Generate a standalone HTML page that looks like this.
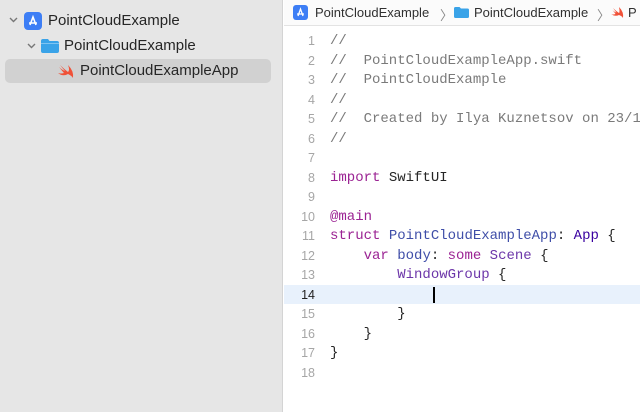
<!DOCTYPE html>
<html><head><style>
*{margin:0;padding:0;box-sizing:border-box}
body{width:640px;height:412px;overflow:hidden;background:#fff;font-family:"Liberation Sans",sans-serif;position:relative}
#side{position:absolute;left:0;top:0;width:283px;height:412px;background:#e6e6e6;border-right:1px solid #d4d4d4}
.row{position:absolute;height:24px;line-height:24px;font-size:15px;color:#262626;white-space:nowrap}
#sel{position:absolute;left:5px;top:59px;width:266px;height:24px;background:#d1d1d1;border-radius:5px}
#bc{position:absolute;left:284px;top:0;width:356px;height:26px;border-bottom:1px solid #e3e3e3;background:#fbfbfb;font-size:13px;color:#303030;white-space:nowrap;overflow:hidden}
#bc span{position:absolute;top:5px}
#ed{position:absolute;left:284px;top:27px;width:356px;height:385px;overflow:hidden}
.ln{position:absolute;left:0;width:31px;text-align:right;font-size:12.5px;color:#a6a6a6;font-family:"Liberation Sans",sans-serif}
.cd{position:absolute;left:46px;font-family:"Liberation Mono",monospace;font-size:14px;white-space:pre;color:#262626}
.c{color:#7a7a7a}.k{color:#9b2393}.t{color:#3900a0}.p{color:#6c36a9}.u{color:#3f4ea8}
</style></head><body>
<div id="side">
<svg style="position:absolute;left:9px;top:17px" width="9" height="6"><path d="M1 1 L4.5 4.5 L8 1" stroke="#777" stroke-width="1.4" fill="none"/></svg>
<svg style="position:absolute;left:24px;top:12px" width="18" height="18"><rect x="0" y="0" width="18" height="18" rx="4" fill="#3d7ef5"/><path d="M6 13 L9 5 L12 13 M5 11 H13" stroke="#fff" stroke-width="1.6" fill="none"/></svg>
<div class="row" style="left:48px;top:9px">PointCloudExample</div>
<svg style="position:absolute;left:27px;top:43px" width="9" height="6"><path d="M1 1 L4.5 4.5 L8 1" stroke="#777" stroke-width="1.4" fill="none"/></svg>
<svg style="position:absolute;left:41px;top:39px" width="18" height="14"><path d="M0 2 Q0 0 2 0 H7 L8.5 2 H16 Q18 2 18 4 V12 Q18 14 16 14 H2 Q0 14 0 12Z" fill="#3aa3e8"/><rect x="0" y="4" width="18" height="1" fill="#7fc4f2"/></svg>
<div class="row" style="left:64px;top:34px">PointCloudExample</div>
<div id="sel"></div>
<svg style="position:absolute;left:57px;top:63px" width="18" height="16"><path d="M1 10 Q6 14 11 11 Q15 13 16 15 Q17 8 11 2 Q13 7 11 9 Q7 6 3 2 Q7 7 8 8 Q5 7 2 4 Q6 9 7 10 Q4 11 1 10Z" fill="#f05138"/></svg>
<div class="row" style="left:80px;top:59px">PointCloudExampleApp</div>
</div>
<div id="bc">
<svg style="position:absolute;left:9px;top:5px" width="15" height="15"><rect width="15" height="15" rx="3" fill="#3d7ef5"/><path d="M5 11 L7.5 4 L10 11 M4 9 H11" stroke="#fff" stroke-width="1.3" fill="none"/></svg>
<span style="left:31px">PointCloudExample</span><span style="left:156px;color:#888">&#x232A;</span>
<svg style="position:absolute;left:170px;top:7px" width="15" height="11"><path d="M0 1.5 Q0 0 1.5 0 H5.5 L7 1.5 H13.5 Q15 1.5 15 3 V9.5 Q15 11 13.5 11 H1.5 Q0 11 0 9.5Z" fill="#3aa3e8"/></svg>
<span style="left:190px">PointCloudExample</span><span style="left:313px;color:#888">&#x232A;</span>
<svg style="position:absolute;left:326px;top:6px" width="14" height="13"><path d="M1 8 Q5 11 9 9 Q12 10 13 12 Q14 6 9 1 Q10 6 9 7 Q6 5 3 2 Q6 6 6.5 6.5 Q4 6 2 3.5 Q5 7 5.5 8 Q3 9 1 8Z" fill="#f05138"/></svg>
<span style="left:344px">P</span>
</div>
<div id="ed">
<div style="position:absolute;left:0;top:258px;width:356px;height:19px;background:#e8f1fc"></div>
<div class="ln" style="top:7px">1</div><div class="cd c" style="top:6px">//</div>
<div class="ln" style="top:27px">2</div><div class="cd c" style="top:26px">//  PointCloudExampleApp.swift</div>
<div class="ln" style="top:46px">3</div><div class="cd c" style="top:45px">//  PointCloudExample</div>
<div class="ln" style="top:66px">4</div><div class="cd c" style="top:65px">//</div>
<div class="ln" style="top:85px">5</div><div class="cd c" style="top:84px">//  Created by Ilya Kuznetsov on 23/11/2023.</div>
<div class="ln" style="top:105px">6</div><div class="cd c" style="top:104px">//</div>
<div class="ln" style="top:124px">7</div>
<div class="ln" style="top:144px">8</div><div class="cd" style="top:143px"><span class="k">import</span> SwiftUI</div>
<div class="ln" style="top:163px">9</div>
<div class="ln" style="top:183px">10</div><div class="cd k" style="top:182px">@main</div>
<div class="ln" style="top:202px">11</div><div class="cd" style="top:201px"><span class="k">struct</span> <span class="u">PointCloudExampleApp</span>: <span class="t">App</span> {</div>
<div class="ln" style="top:222px">12</div><div class="cd" style="top:221px">    <span class="k">var</span> <span class="u">body</span>: <span class="k">some</span> <span class="p">Scene</span> {</div>
<div class="ln" style="top:241px">13</div><div class="cd" style="top:240px">        <span class="p">WindowGroup</span> {</div>
<div class="ln" style="top:261px;color:#222">14</div>
<div style="position:absolute;left:149px;top:260px;width:2px;height:16px;background:#000"></div>
<div class="ln" style="top:280px">15</div><div class="cd" style="top:279px">        }</div>
<div class="ln" style="top:300px">16</div><div class="cd" style="top:299px">    }</div>
<div class="ln" style="top:319px">17</div><div class="cd" style="top:318px">}</div>
<div class="ln" style="top:339px">18</div>
</div>
</body></html>
